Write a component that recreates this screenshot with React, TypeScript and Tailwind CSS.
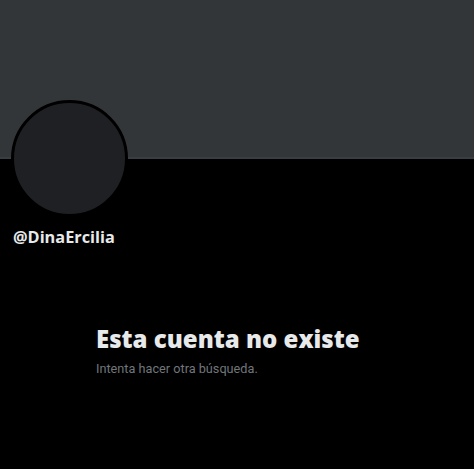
export default function App() {
    return (
        <div className="w-[474px] h-[469px] bg-black overflow-hidden" style={{ fontFamily: 'Roboto, "Noto Sans", sans-serif' }}>
            {/* Banner */}
            <div className="h-[159px] bg-[#333639] border-b-2 border-[#3a3d41]" />

            {/* Avatar */}
            <div className="pl-[11px] -mt-[59px]">
                <div className="w-[117px] h-[117px] rounded-full bg-[#1f2023] border-[3px] border-black" />
            </div>

            <div
                className="pl-[13px] mt-[10px] text-[16.3px] font-bold leading-[20px] text-[#e7e9ea]"
                style={{ fontFamily: '"Open Sans", sans-serif' }}
            >
                @DinaErcilia
            </div>

            {/* Empty state */}
            <div className="w-[282px] mx-auto mt-[78px]">
                <div
                    className="text-[24px] font-extrabold leading-[28px] text-[#e7e9ea]"
                    style={{ fontFamily: '"Open Sans", sans-serif' }}
                >
                    Esta cuenta no existe
                </div>
                <div className="mt-[7px] text-[12.7px] leading-[17px] text-[#71767b]">Intenta hacer otra búsqueda.</div>
            </div>
        </div>
    );
}
